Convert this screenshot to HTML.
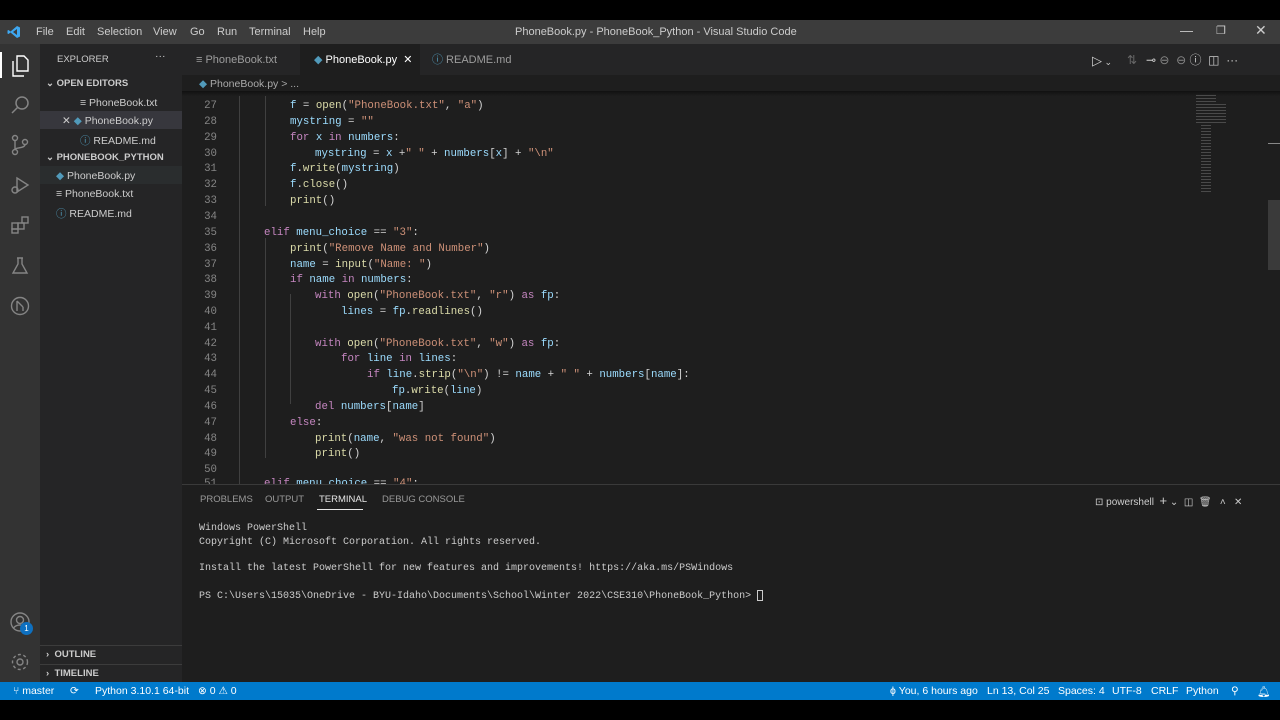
<!DOCTYPE html>
<html><head><meta charset="utf-8"><style>
*{margin:0;padding:0;box-sizing:border-box}
body{width:1280px;height:720px;background:#000;position:relative;overflow:hidden;font-family:"Liberation Sans",sans-serif;font-size:11px;color:#ccc}
.abs{position:absolute}
#title{left:0;top:20px;width:1280px;height:24px;background:#3c3c3c;color:#ccc;font-size:11px}
#title span{position:absolute;top:6px}
#act{left:0;top:44px;width:40px;height:638px;background:#333}
#side{left:40px;top:44px;width:142px;height:638px;background:#252526}
#editor{left:182px;top:44px;width:1098px;height:440px;background:#1e1e1e}
#tabs{left:182px;top:44px;width:1098px;height:31px;background:#252526}
.tab{position:absolute;top:1px;height:31px;line-height:31px;font-size:11px;color:#9d9d9d}
#panel{left:182px;top:484px;width:1098px;height:198px;background:#1e1e1e;border-top:1px solid #3a3a3a}
#status{left:0;top:682px;width:1280px;height:18px;background:#007acc;color:#fff;font-size:10.5px}
#status span{position:absolute;top:3px}
.code{position:absolute;left:0;font-family:"Liberation Mono",monospace;font-size:10.75px;white-space:pre;color:#d4d4d4}
.ln{position:absolute;width:35px;text-align:right;left:182px;font-family:"Liberation Mono",monospace;font-size:10.75px;color:#858585}
.k{color:#c586c0}.v{color:#9cdcfe}.f{color:#dcdcaa}.s{color:#ce9178}
.term{position:absolute;left:199px;font-family:"Liberation Mono",monospace;font-size:10px;color:#ccc;white-space:pre}
.sh{position:absolute;font-size:10.5px;color:#ccc}
#code{position:absolute;left:0;top:2px;width:1280px}
</style></head><body>
<div id="title" class="abs">
<svg style="position:absolute;left:7px;top:5px" width="14" height="14" viewBox="0 0 14 14"><path d="M10 1 L13 2.5 V11.5 L10 13 L3.5 7.5 L1.5 9 L0.5 8.5 V5.5 L1.5 5 L3.5 6.5 Z M10 4 L6 7 L10 10 Z" fill="#3ea7f0"/></svg>
<span style="left:36px">File</span><span style="left:66px">Edit</span><span style="left:97px">Selection</span><span style="left:153px">View</span><span style="left:190px">Go</span><span style="left:217px">Run</span><span style="left:249px">Terminal</span><span style="left:303px">Help</span>
<span style="left:515px">PhoneBook.py - PhoneBook_Python - Visual Studio Code</span>
<span style="left:1180px;top:3px;font-size:13px">—</span><span style="left:1216px;top:4px;font-size:11px">❐</span><span style="left:1255px;top:2px;font-size:14px">✕</span>
</div>
<div id="act" class="abs">
<div class="abs" style="left:0;top:8px;width:2px;height:26px;background:#fff"></div>
<svg class="abs" style="left:10px;top:11px" width="20" height="22" viewBox="0 0 20 22" fill="none" stroke="#fff" stroke-width="1.4"><path d="M7 1h7l4 4v11H7z M3 6v15h11"/></svg>
<svg class="abs" style="left:10px;top:51px" width="20" height="20" fill="none" stroke="#858585" stroke-width="1.5"><circle cx="12" cy="8" r="6"/><path d="M8 12l-6 6"/></svg>
<svg class="abs" style="left:10px;top:90px" width="20" height="22" fill="none" stroke="#858585" stroke-width="1.4"><circle cx="5" cy="4" r="2.5"/><circle cx="5" cy="18" r="2.5"/><circle cx="15" cy="8" r="2.5"/><path d="M5 6.5v9M15 10.5c0 4-10 3-10 5"/></svg>
<svg class="abs" style="left:10px;top:131px" width="20" height="20" fill="none" stroke="#858585" stroke-width="1.4"><path d="M7 3l11 7-11 7z"/><circle cx="5" cy="15" r="3"/></svg>
<svg class="abs" style="left:10px;top:171px" width="20" height="20" fill="none" stroke="#858585" stroke-width="1.4"><rect x="2" y="8" width="6" height="6"/><rect x="8" y="8" width="6" height="6"/><rect x="2" y="14" width="6" height="4"/><rect x="12" y="2" width="6" height="6"/></svg>
<svg class="abs" style="left:11px;top:212px" width="18" height="20" fill="none" stroke="#858585" stroke-width="1.4"><path d="M6 2h6M7 2v6L2 17h14L11 8V2"/></svg>
<svg class="abs" style="left:10px;top:252px" width="20" height="20" fill="none" stroke="#858585" stroke-width="1.4"><circle cx="10" cy="10" r="8.5"/><path d="M7 5l6 6M7 5v10M13 11v4"/></svg>
<svg class="abs" style="left:9px;top:567px" width="22" height="22" fill="none" stroke="#858585" stroke-width="1.4"><circle cx="11" cy="11" r="9"/><circle cx="11" cy="9" r="3.5"/><path d="M4.5 17c3-4 10-4 13 0"/></svg>
<div class="abs" style="left:20px;top:578px;width:13px;height:13px;border-radius:50%;background:#0e70c0;color:#fff;font-size:8px;text-align:center;line-height:13px">1</div>
<svg class="abs" style="left:9px;top:607px" width="22" height="22" fill="none" stroke="#858585" stroke-width="1.4"><circle cx="11" cy="11" r="3"/><circle cx="11" cy="11" r="7.5" stroke-dasharray="3 2.5"/></svg>
</div>
<div id="side" class="abs">
<div class="sh" style="left:17px;top:10px;font-size:9.5px">EXPLORER</div><div class="sh" style="left:115px;top:6px">···</div>
<div class="sh" style="left:6px;top:34px;font-weight:bold;font-size:9.5px">⌄ OPEN EDITORS</div>
<div class="sh" style="left:40px;top:53px">≡ PhoneBook.txt</div>
<div class="abs" style="left:0;top:67px;width:142px;height:18px;background:#37373d"></div>
<div class="sh" style="left:22px;top:71px">✕ <span style="color:#519aba">◆</span> PhoneBook.py</div>
<div class="sh" style="left:40px;top:89px"><span style="color:#519aba">ⓘ</span> README.md</div>
<div class="sh" style="left:6px;top:108px;font-weight:bold;font-size:9.5px">⌄ PHONEBOOK_PYTHON</div>
<div class="abs" style="left:0;top:122px;width:142px;height:18px;background:#2a2d2e"></div>
<div class="sh" style="left:16px;top:126px"><span style="color:#519aba">◆</span> PhoneBook.py</div>
<div class="sh" style="left:16px;top:144px">≡ PhoneBook.txt</div>
<div class="sh" style="left:16px;top:162px"><span style="color:#519aba">ⓘ</span> README.md</div>
<div class="abs" style="left:0;top:601px;width:142px;height:1px;background:#3c3c3c"></div>
<div class="sh" style="left:6px;top:605px;font-weight:bold;font-size:9.5px">›&nbsp; OUTLINE</div>
<div class="abs" style="left:0;top:620px;width:142px;height:1px;background:#3c3c3c"></div>
<div class="sh" style="left:6px;top:624px;font-weight:bold;font-size:9.5px">›&nbsp; TIMELINE</div>
</div>
<div id="editor" class="abs"></div>
<div id="tabs" class="abs">
<div class="tab" style="left:0;width:118px;padding-left:14px">≡ PhoneBook.txt</div>
<div class="tab" style="left:118px;top:0;width:120px;height:31px;background:#1e1e1e;color:#fff;padding-left:14px;line-height:33px"><span style="color:#519aba">◆</span> PhoneBook.py &nbsp;✕</div>
<div class="tab" style="left:238px;width:100px;padding-left:12px"><span style="color:#519aba">ⓘ</span> README.md</div>
<div class="tab" style="left:910px;color:#ccc;font-size:13px">▷<span style="font-size:9px"> ⌄</span></div>
<div class="tab" style="left:945px;color:#666;font-size:12px">⇅</div>
<div class="tab" style="left:964px;color:#ccc;font-size:12px">⊸ <span style="color:#888">⊖ &nbsp;⊖ </span> ⓘ &nbsp;◫ &nbsp;···</div>
</div>
<div class="abs sh" style="left:199px;top:78px;color:#aaa"><span style="color:#519aba">◆</span> PhoneBook.py &gt; ...</div>
<div class="abs" style="left:182px;top:91px;width:1098px;height:393px;overflow:hidden">
<div style="position:absolute;left:0;top:0;width:1098px;height:5px;background:linear-gradient(#111,#1e1e1e)"></div>
</div>
<div class="abs" style="left:182px;top:96px;width:1010px;height:388px;overflow:hidden">
<div class="abs" style="left:57px;top:0;width:1px;height:388px;background:#404040"></div>
<div class="abs" style="left:83px;top:0;width:1px;height:110px;background:#404040"></div>
<div class="abs" style="left:83px;top:142px;width:1px;height:220px;background:#404040"></div>
<div class="abs" style="left:108px;top:198px;width:1px;height:110px;background:#404040"></div>
<div class="code" style="left:82px;top:382px"><span class="k">elif</span> <span class="v">menu_choice</span> == <span class="s">"4"</span>:</div>
<div class="ln" style="left:0;top:382px">51</div>
</div>
<div id="code">
<div class="ln" style="top:98px">27</div><div class="code" style="left:290px;top:98px"><span class="v">f</span> = <span class="f">open</span>(<span class="s">"PhoneBook.txt"</span>, <span class="s">"a"</span>)</div>
<div class="ln" style="top:114px">28</div><div class="code" style="left:290px;top:114px"><span class="v">mystring</span> = <span class="s">""</span></div>
<div class="ln" style="top:130px">29</div><div class="code" style="left:290px;top:130px"><span class="k">for</span> <span class="v">x</span> <span class="k">in</span> <span class="v">numbers</span>:</div>
<div class="ln" style="top:146px">30</div><div class="code" style="left:315px;top:146px"><span class="v">mystring</span> = <span class="v">x</span> +<span class="s">" "</span> + <span class="v">numbers</span>[<span class="v">x</span>] + <span class="s">"\n"</span></div>
<div class="ln" style="top:161px">31</div><div class="code" style="left:290px;top:161px"><span class="v">f</span>.<span class="f">write</span>(<span class="v">mystring</span>)</div>
<div class="ln" style="top:177px">32</div><div class="code" style="left:290px;top:177px"><span class="v">f</span>.<span class="f">close</span>()</div>
<div class="ln" style="top:193px">33</div><div class="code" style="left:290px;top:193px"><span class="f">print</span>()</div>
<div class="ln" style="top:209px">34</div>
<div class="ln" style="top:225px">35</div><div class="code" style="left:264px;top:225px"><span class="k">elif</span> <span class="v">menu_choice</span> == <span class="s">"3"</span>:</div>
<div class="ln" style="top:241px">36</div><div class="code" style="left:290px;top:241px"><span class="f">print</span>(<span class="s">"Remove Name and Number"</span>)</div>
<div class="ln" style="top:257px">37</div><div class="code" style="left:290px;top:257px"><span class="v">name</span> = <span class="f">input</span>(<span class="s">"Name: "</span>)</div>
<div class="ln" style="top:272px">38</div><div class="code" style="left:290px;top:272px"><span class="k">if</span> <span class="v">name</span> <span class="k">in</span> <span class="v">numbers</span>:</div>
<div class="ln" style="top:288px">39</div><div class="code" style="left:315px;top:288px"><span class="k">with</span> <span class="f">open</span>(<span class="s">"PhoneBook.txt"</span>, <span class="s">"r"</span>) <span class="k">as</span> <span class="v">fp</span>:</div>
<div class="ln" style="top:304px">40</div><div class="code" style="left:341px;top:304px"><span class="v">lines</span> = <span class="v">fp</span>.<span class="f">readlines</span>()</div>
<div class="ln" style="top:320px">41</div>
<div class="ln" style="top:336px">42</div><div class="code" style="left:315px;top:336px"><span class="k">with</span> <span class="f">open</span>(<span class="s">"PhoneBook.txt"</span>, <span class="s">"w"</span>) <span class="k">as</span> <span class="v">fp</span>:</div>
<div class="ln" style="top:351px">43</div><div class="code" style="left:341px;top:351px"><span class="k">for</span> <span class="v">line</span> <span class="k">in</span> <span class="v">lines</span>:</div>
<div class="ln" style="top:367px">44</div><div class="code" style="left:367px;top:367px"><span class="k">if</span> <span class="v">line</span>.<span class="f">strip</span>(<span class="s">"\n"</span>) != <span class="v">name</span> + <span class="s">" "</span> + <span class="v">numbers</span>[<span class="v">name</span>]:</div>
<div class="ln" style="top:383px">45</div><div class="code" style="left:392px;top:383px"><span class="v">fp</span>.<span class="f">write</span>(<span class="v">line</span>)</div>
<div class="ln" style="top:399px">46</div><div class="code" style="left:315px;top:399px"><span class="k">del</span> <span class="v">numbers</span>[<span class="v">name</span>]</div>
<div class="ln" style="top:415px">47</div><div class="code" style="left:290px;top:415px"><span class="k">else</span>:</div>
<div class="ln" style="top:431px">48</div><div class="code" style="left:315px;top:431px"><span class="f">print</span>(<span class="v">name</span>, <span class="s">"was not found"</span>)</div>
<div class="ln" style="top:446px">49</div><div class="code" style="left:315px;top:446px"><span class="f">print</span>()</div>
<div class="ln" style="top:462px">50</div>
</div>
<div class="abs" style="left:1196px;top:94px;width:50px;height:100px;opacity:.5;background:repeating-linear-gradient(#1e1e1e 0 1px,#777 1px 2px,#1e1e1e 2px 3px);clip-path:polygon(0 0,40% 0,40% 10%,60% 10%,60% 30%,30% 30%,30% 100%,10% 100%,10% 30%,0 30%)"></div>
<div class="abs" style="left:1268px;top:200px;width:12px;height:70px;background:#3a3a3a"></div>
<div class="abs" style="left:1268px;top:143px;width:12px;height:1px;background:#888"></div>
<div id="panel" class="abs">
<div class="sh" style="left:18px;top:9px;font-size:9.5px;color:#999">PROBLEMS</div>
<div class="sh" style="left:83px;top:9px;font-size:9.5px;color:#999">OUTPUT</div>
<div class="sh" style="left:137px;top:9px;font-size:9.5px;color:#e7e7e7">TERMINAL</div>
<div class="abs" style="left:135px;top:24px;width:46px;height:1px;background:#e7e7e7"></div>
<div class="sh" style="left:200px;top:9px;font-size:9.5px;color:#999">DEBUG CONSOLE</div>
<div class="sh" style="left:913px;top:8px;font-size:10px">⊡ powershell &nbsp;<span style="font-size:13px">+</span> ⌄ &nbsp;◫ &nbsp;🗑 &nbsp; ˄ &nbsp; ✕</div>
</div>
<div class="term" style="top:523px">Windows PowerShell</div>
<div class="term" style="top:537px">Copyright (C) Microsoft Corporation. All rights reserved.</div>
<div class="term" style="top:563px">Install the latest PowerShell for new features and improvements! https://aka.ms/PSWindows</div>
<div class="term" style="top:590px">PS C:\Users\15035\OneDrive - BYU-Idaho\Documents\School\Winter 2022\CSE310\PhoneBook_Python&gt; <span style="display:inline-block;width:6px;height:11px;border:1px solid #ccc;vertical-align:middle"></span></div>
<div id="status" class="abs">
<span style="left:13px">⑂ master</span><span style="left:70px">⟳</span><span style="left:95px">Python 3.10.1 64-bit</span><span style="left:198px">⊗ 0 ⚠ 0</span>
<span style="left:890px">ϕ You, 6 hours ago</span><span style="left:987px">Ln 13, Col 25</span><span style="left:1058px">Spaces: 4</span><span style="left:1112px">UTF-8</span><span style="left:1151px">CRLF</span><span style="left:1186px">Python</span><span style="left:1231px">⚲</span><span style="left:1257px">🔔︎</span>
</div>
</body></html>
